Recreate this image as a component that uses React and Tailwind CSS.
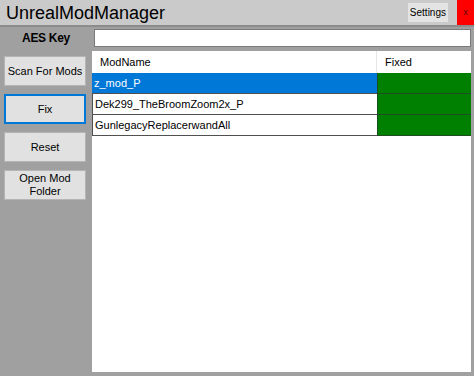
import React from 'react';

const mods = [
  { name: 'z_mod_P', selected: true },
  { name: 'Dek299_TheBroomZoom2x_P' },
  { name: 'GunlegacyReplacerwandAll' },
];

function SideButton({ children, active = false }) {
  return (
    <button
      className={`w-[82px] h-[30px] bg-[#e1e1e1] text-[11px] leading-[13px] text-black ${
        active ? 'border-2 border-[#0078d7]' : 'border border-[#b4b4b4]'
      }`}
    >
      {children}
    </button>
  );
}

export default function App() {
  return (
    <div
      className="w-[474px] h-[376px] flex flex-col bg-[#a0a0a0] overflow-hidden"
      style={{ fontFamily: '"Liberation Sans", Arial, sans-serif' }}
    >
      {/* title bar */}
      <div className="h-[27px] shrink-0 flex items-center bg-[#cacaca] border-b-2 border-[#8c8c8c]">
        <span className="pl-[6px] text-[18px] text-black flex-1 leading-none">
          UnrealModManager
        </span>
        <button className="h-[19px] px-[2px] mr-[9px] bg-[#e3e3e3] text-[10px] text-black">
          Settings
        </button>
        <div className="w-[17px] h-full bg-[#ff0000] flex items-center justify-center text-[9px] text-[#600000]">
          x
        </div>
      </div>

      {/* body */}
      <div className="flex-1 grid grid-cols-[92px_1fr] grid-rows-[auto_1fr] pr-[3px] pb-[4px]">
        <div className="flex items-center justify-center pt-[2px] text-[12px] font-bold text-black tracking-[-0.3px]">
          AES Key
        </div>
        <div className="pt-[2px] pl-[2px]">
          <div className="h-[18px] bg-white border border-[#7a7a7a]" />
        </div>

        <div className="flex flex-col items-start gap-[8px] pl-[4px] pt-[9px]">
          <SideButton>Scan For Mods</SideButton>
          <SideButton active>Fix</SideButton>
          <SideButton>Reset</SideButton>
          <SideButton>
            Open Mod
            <br />
            Folder
          </SideButton>
        </div>

        <div className="mt-[4px] bg-white flex flex-col">
          <div className="h-[22px] flex text-[11px] text-black">
            <div className="w-[285px] pl-[8px] flex items-center border-r border-[#e6e6e6]">ModName</div>
            <div className="flex-1 pl-[8px] flex items-center">Fixed</div>
          </div>
          {mods.map((m) => (
            <div key={m.name} className="h-[21px] flex text-[11px]">
              <div
                className={`w-[285px] pl-[2px] flex items-center border-b border-[#505050] ${
                  m.selected ? 'bg-[#0078d7] text-white' : 'bg-white text-black border-l border-[#505050]'
                }`}
              >
                {m.name}
              </div>
              <div className="flex-1 bg-[#008000] border-l border-b border-[#1e4d1e]" />
            </div>
          ))}
        </div>
      </div>
    </div>
  );
}
